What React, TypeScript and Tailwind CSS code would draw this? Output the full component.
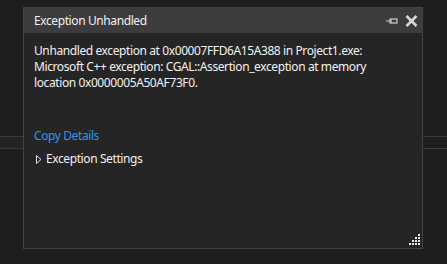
export default function App() {
  return (
    <div className="relative w-[447px] h-[264px] bg-[#1e1e1e] overflow-hidden" style={{ fontFamily: '"Noto Sans", "Open Sans", sans-serif' }}>
      {/* editor lines behind the popup */}
      <div className="absolute left-0 right-0 top-[136px] h-px bg-[#3a3a3a]" />
      <div className="absolute left-0 right-0 top-[148px] h-px bg-[#3a3a3a]" />
      <div className="absolute left-0 w-[23px] top-[137px] h-[11px] bg-[#232323]" />
      <div className="relative ml-[23px] mt-[7px] w-[400px] h-[242px] flex flex-col bg-[#252526] border border-[#434346]">
        <div className="flex items-center h-[25px] bg-[#3c3c3f] pl-[10px] pr-[4px] text-[12px] tracking-[-0.4px] text-[#f1f1f1]">
          <span className="flex-1">Exception Unhandled</span>
          <svg width="12" height="8" viewBox="0 0 12 8" className="mr-[7px]">
            <path d="M0 4H4M4 1.5V6.5" stroke="#d0d0d0" strokeWidth="1.2" fill="none" />
            <rect x="5" y="2" width="6" height="4" stroke="#d0d0d0" strokeWidth="1.2" fill="none" />
          </svg>
          <svg width="13" height="12" viewBox="0 0 13 12">
            <path d="M1.5 1L11.5 11M11.5 1L1.5 11" stroke="#d6d6d6" strokeWidth="2.6" />
          </svg>
        </div>
        <div className="flex flex-col pl-[10px] pt-[10px] text-[12px] leading-[16px] tracking-[-0.4px] text-[#f1f1f1]">
          <div>Unhandled exception at 0x00007FFD6A15A388 in Project1.exe:</div>
          <div>Microsoft C++ exception: CGAL::Assertion_exception at memory</div>
          <div>location 0x0000005A50AF73F0.</div>
          <div className="mt-[37px] text-[#2b97ef]">Copy Details</div>
          <div className="mt-[7px] flex items-center gap-[4px]">
            <svg width="6" height="9" viewBox="0 0 6 9" className="ml-[2px]">
              <path d="M0.5 0.5L5 4.5L0.5 8.5Z" stroke="#e0e0e0" strokeWidth="1" fill="none" />
            </svg>
            <span>Exception Settings</span>
          </div>
        </div>
        <div className="absolute right-[2px] bottom-[3px] grid grid-cols-4 gap-[1px]">
          {[0, 0, 0, 1, 0, 0, 1, 1, 0, 1, 1, 1, 1, 1, 1, 1].map((v, i) => (
            <div key={i} className={v ? "w-[2px] h-[2px] bg-[#e8e8f0]" : "w-[2px] h-[2px]"} />
          ))}
        </div>
      </div>
    </div>
  );
}
